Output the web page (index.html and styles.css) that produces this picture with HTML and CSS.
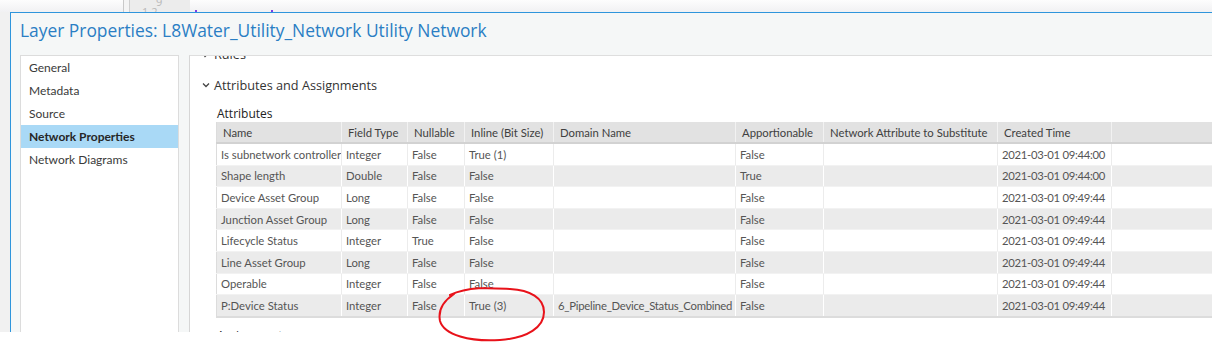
FILE: index.html
```html
<!DOCTYPE html>
<html>
<head>
<meta charset="utf-8">
<link rel="stylesheet" href="styles.css">
</head>
<body>
<div class="topstrip">
  <div class="bg-panel"><span class="ghost">9</span><span class="ghost g2">1 2</span></div>
  <span class="mark m1"></span><span class="mark m2"></span>
</div>
<div class="frame">
  <div class="dialog">
    <div class="title">Layer Properties: L8Water_Utility_Network Utility Network</div>
    <div class="main">
      <div class="nav">
        <div class="nav-item">General</div>
        <div class="nav-item">Metadata</div>
        <div class="nav-item">Source</div>
        <div class="nav-item selected">Network Properties</div>
        <div class="nav-item">Network Diagrams</div>
      </div>
      <div class="content">
        <div class="section rules">
          <svg class="chev" width="8" height="8" viewBox="0 0 8 8"><path d="M2.5 1 L5.5 4 L2.5 7" fill="none" stroke="#444" stroke-width="1.3"/></svg>
          <span>Rules</span>
        </div>
        <div class="section">
          <svg class="chev" width="8" height="8" viewBox="0 0 8 8"><path d="M1 2.5 L4 5.5 L7 2.5" fill="none" stroke="#444" stroke-width="1.3"/></svg>
          <span>Attributes and Assignments</span>
        </div>
        <div class="sub">Attributes</div>
        <table class="grid">
          <colgroup>
            <col style="width:125px"><col style="width:66px"><col style="width:57px"><col style="width:89px"><col style="width:182px"><col style="width:88px"><col style="width:174px"><col style="width:114px"><col style="width:200px">
          </colgroup>
          <thead>
            <tr><th>Name</th><th>Field Type</th><th>Nullable</th><th>Inline (Bit Size)</th><th>Domain Name</th><th>Apportionable</th><th>Network Attribute to Substitute</th><th>Created Time</th><th></th></tr>
          </thead>
          <tbody>
            <tr><td>Is subnetwork controller</td><td>Integer</td><td>False</td><td>True (1)</td><td></td><td>False</td><td></td><td class="time">2021-03-01 09:44:00</td><td></td></tr>
            <tr><td>Shape length</td><td>Double</td><td>False</td><td>False</td><td></td><td>True</td><td></td><td class="time">2021-03-01 09:44:00</td><td></td></tr>
            <tr><td>Device Asset Group</td><td>Long</td><td>False</td><td>False</td><td></td><td>False</td><td></td><td class="time">2021-03-01 09:49:44</td><td></td></tr>
            <tr><td>Junction Asset Group</td><td>Long</td><td>False</td><td>False</td><td></td><td>False</td><td></td><td class="time">2021-03-01 09:49:44</td><td></td></tr>
            <tr><td>Lifecycle Status</td><td>Integer</td><td>True</td><td>False</td><td></td><td>False</td><td></td><td class="time">2021-03-01 09:49:44</td><td></td></tr>
            <tr><td>Line Asset Group</td><td>Long</td><td>False</td><td>False</td><td></td><td>False</td><td></td><td class="time">2021-03-01 09:49:44</td><td></td></tr>
            <tr><td>Operable</td><td>Integer</td><td>False</td><td>False</td><td></td><td>False</td><td></td><td class="time">2021-03-01 09:49:44</td><td></td></tr>
            <tr><td>P:Device Status</td><td>Integer</td><td>False</td><td>True (3)</td><td class="domain">6_Pipeline_Device_Status_Combined</td><td>False</td><td></td><td class="time">2021-03-01 09:49:44</td><td></td></tr>
          </tbody>
        </table>
        <div class="sub next">Assignments</div>
      </div>
    </div>
  </div>
</div>
<svg class="annot" width="130" height="70" viewBox="0 0 130 70">
  <path d="M20 15 C 40 6, 62 8, 80 9 C 100 10, 114 18, 114 32 C 114 47, 98 58, 70 60 C 40 62, 14 55, 10 41 C 8 31, 12 22, 24 14" fill="none" stroke="#e8121a" stroke-width="2" stroke-linecap="round"/>
</svg>
</body>
</html>
```
FILE: styles.css
```css
html, body {
  margin: 0;
  padding: 0;
}
body {
  width: 1212px;
  height: 342px;
  overflow: hidden;
  background: #ffffff;
  font-family: "Open Sans", "Noto Sans", sans-serif;
  position: relative;
}
.topstrip {
  height: 12px;
  position: relative;
  background: linear-gradient(#fdfdfd, #f1f1f3);
}
.bg-panel {
  position: absolute;
  left: 123px;
  top: 0;
  width: 66px;
  height: 12px;
  background: #ececec;
  border-left: 1px solid #c9c9c9;
  box-shadow: inset 5px 0 0 #f4f4f4, inset 6px 0 0 #cfcfcf;
  overflow: hidden;
}
.ghost {
  position: absolute;
  left: 32px;
  top: -6px;
  font-size: 11px;
  color: #b8b8b8;
}
.ghost.g2 { left: 18px; top: 4px; }
.mark {
  position: absolute;
  top: 10px;
  width: 2px;
  height: 2px;
  background: #7a3ee6;
}
.m1 { left: 195px; }
.m2 { left: 271px; }
.frame {
  display: flex;
  height: 320px;
  background: #f1f1f1;
  padding-left: 10px;
}
.dialog {
  flex: 1;
  border-top: 1px solid #2e95dc;
  border-left: 1px solid #2e95dc;
  background: #f5f7f7;
  display: flex;
  flex-direction: column;
  overflow: hidden;
}
.title {
  height: 42px;
  line-height: 34px;
  padding-left: 9px;
  font-size: 17.4px;
  color: #2a7ec4;
  white-space: nowrap;
}
.main {
  flex: 1;
  display: flex;
  gap: 10px;
  padding-left: 9px;
  min-height: 0;
}
.nav {
  width: 157px;
  border: 1px solid #dcdcdc;
  border-bottom: none;
  background: #ffffff;
}
.nav-item {
  height: 23px;
  line-height: 23px;
  padding-left: 8px;
  font-family: "Lato", "Open Sans", sans-serif;
  font-size: 12px;
  color: #3a3a3a;
}
.nav-item.selected {
  background: #a9d9f6;
  font-weight: 700;
  color: #262626;
}
.content {
  flex: 1;
  border-left: 1px solid #d6d6d6;
  border-top: 1px solid #dedede;
  background: #ffffff;
  overflow: hidden;
  min-width: 0;
}
.section {
  display: flex;
  align-items: center;
  gap: 4px;
  padding-left: 12px;
  height: 22px;
  font-size: 12.7px;
  color: #333;
}
.section.rules {
  margin-top: -13px;
  margin-bottom: 9px;
}
.chev { flex: none; }
.sub {
  padding-left: 27px;
  margin-top: 9px;
  height: 17px;
  line-height: 17px;
  font-size: 12px;
  color: #222;
}
.sub.next { margin-top: 9px; }
.grid {
  margin-left: 26px;
  border-collapse: collapse;
  table-layout: fixed;
  width: 1095px;
  font-family: "Lato", "Open Sans", sans-serif;
  font-size: 11.3px;
}
.grid th {
  height: 20px;
  background: #e2e2e2;
  border-left: 1px solid #f2f2f2;
  border-bottom: 2px solid #d2d2d2;
  text-align: left;
  font-weight: 400;
  padding: 0 0 0 6px;
  color: #404040;
  white-space: nowrap;
  overflow: hidden;
}
.grid th:first-child { border-left: 1px solid #dcdcdc; }
.grid td {
  height: 20.6px;
  padding: 0 0 0 4px;
  color: #555;
  white-space: nowrap;
  overflow: hidden;
  border-left: 1px solid #ececec;
  border-bottom: 1px solid #f2f2f2;
}
.grid td.time { letter-spacing: -0.3px; }
.grid td.domain { letter-spacing: -0.25px; }
.grid td:first-child { border-left: 1px solid #dcdcdc; }
.grid tbody tr:nth-child(even) td {
  background: #ebebeb;
  border-left-color: #ffffff;
}
.grid tbody tr:nth-child(even) td:first-child { border-left-color: #dcdcdc; }
.grid tbody tr:last-child td { border-bottom: 2px solid #dcdcdc; }
.annot {
  position: absolute;
  left: 430px;
  top: 280px;
}
```
